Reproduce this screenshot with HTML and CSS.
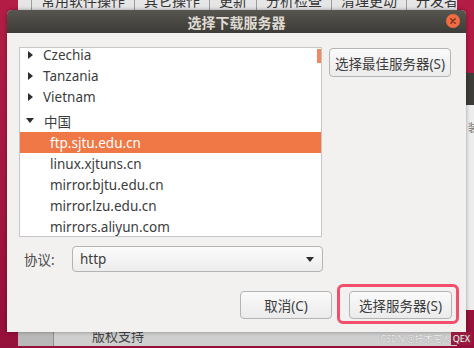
FILE: index.html
```html
<!DOCTYPE html>
<html lang="zh-CN">
<head>
    <meta charset="UTF-8">
    <meta name="viewport" content="width=device-width, initial-scale=1.0">
    <title>选择下载服务器</title>
    <link rel="stylesheet" href="styles.css">
</head>
<body>
    <div class="desktop">
        <!-- janela de fundo -->
        <div class="app-back">
            <div class="app-menu">
                <span class="menu-item">常用软件操作</span>
                <span class="menu-item">其它操作</span>
                <span class="menu-item">更新</span>
                <span class="menu-item">分析检查</span>
                <span class="menu-item">清理更动</span>
                <span class="menu-item">开发者选项</span>
            </div>
            <div class="app-bottom">
                <div class="app-panel">版权支持</div>
            </div>
        </div>
        <div class="side-app">
            <div class="side-dark"></div>
            <div class="side-body">装</div>
        </div>

        <div class="dialog">
            <div class="titlebar">
                <span class="title">选择下载服务器</span>
                <span class="close">
                    <svg width="14" height="14" viewBox="0 0 14 14">
                        <circle cx="7" cy="7" r="7" fill="#ef6d43"/>
                        <path d="M4.8 4.8 L9.2 9.2 M9.2 4.8 L4.8 9.2" stroke="#7a2a12" stroke-width="1.3" stroke-linecap="round"/>
                    </svg>
                </span>
            </div>
            <div class="dialog-body">
                <div class="top-row">
                    <div class="tree">
                        <div class="tree-rows">
                            <div class="row parent"><span class="arrow-right"></span>Czechia</div>
                            <div class="row parent"><span class="arrow-right"></span>Tanzania</div>
                            <div class="row parent"><span class="arrow-right"></span>Vietnam</div>
                            <div class="row parent open"><span class="arrow-down"></span>中国</div>
                            <div class="row child selected">ftp.sjtu.edu.cn</div>
                            <div class="row child">linux.xjtuns.cn</div>
                            <div class="row child">mirror.bjtu.edu.cn</div>
                            <div class="row child">mirror.lzu.edu.cn</div>
                            <div class="row child">mirrors.aliyun.com</div>
                        </div>
                        <div class="scroll-mark"></div>
                    </div>
                    <button class="btn best">选择最佳服务器(S)</button>
                </div>
                <div class="proto-row">
                    <span class="proto-label">协议:</span>
                    <div class="combo">
                        <span>http</span>
                        <span class="caret"></span>
                    </div>
                </div>
                <div class="actions">
                    <button class="btn cancel">取消(C)</button>
                    <button class="btn confirm">选择服务器(S)</button>
                </div>
            </div>
        </div>

        <div class="highlight"></div>
        <div class="watermark">CSDN @技术宅人<b>QEX</b></div>
    </div>
</body>
</html>
```

FILE: styles.css
```css
body {
    margin: 0;
    padding: 0;
    font-family: "Noto Sans", "Noto Sans CJK SC", sans-serif;
    overflow: hidden;
}
.desktop {
    position: relative;
    width: 474px;
    height: 348px;
    background: linear-gradient(#b41d45, #95103a); /* papel de parede */
    overflow: hidden;
}
.app-back {
    position: absolute;
    left: 18px;
    top: 0;
    width: 439px;
    height: 346px;
    background-color: #d6d6d6;
}
.app-menu {
    display: flex;
    height: 10px;
    padding-left: 13px;
    background-color: #e6e6e6;
    overflow: hidden;
}
.menu-item {
    border-left: 1px solid #9c9c9c;
    padding: 0 9px;
    font-size: 14px;
    line-height: 12px;
    color: #333;
    margin-top: -5px;
    white-space: nowrap;
}
.app-bottom {
    position: absolute;
    left: 0;
    right: 0;
    bottom: 0;
    height: 14px;
    background-color: #b9b9b9;
    padding-left: 12px;
}
.app-panel {
    height: 100%;
    margin-left: 23px;
    padding-left: 38px;
    border-left: 1px solid #8e8e8e;
    background-color: #cfcfcf;
    font-size: 13px;
    line-height: 8px;
    color: #444;
    overflow: hidden;
}
.side-app {
    position: absolute;
    left: 465px;
    top: 73px;
    width: 9px;
    height: 237px;
    background-color: #ededed;
}
.side-dark {
    height: 32px;
    background-color: #3d3c38;
}
.side-body {
    padding-top: 14px;
    padding-left: 3px;
    font-size: 11px;
    color: #777;
}
.dialog {
    position: absolute;
    left: 7px;
    top: 10px;
    width: 459px;
    height: 322px;
    background-color: #f2f1f0;
    border-radius: 5px 5px 0 0;
    box-shadow: 0 0 4px rgba(0, 0, 0, 0.35);
    display: flex;
    flex-direction: column;
}
.titlebar {
    height: 23px;
    display: flex;
    align-items: center;
    justify-content: center;
    background: linear-gradient(#57554f, #3d3c38);
    border-radius: 5px 5px 0 0;
    position: relative;
}
.title {
    color: #dfdbd2;
    font-size: 14px;
    font-weight: bold;
}
.close {
    position: absolute;
    right: 6px;
    top: 4px;
    width: 14px;
    height: 14px;
    display: flex;
}
.dialog-body {
    flex: 1;
    padding: 14px 14px 13px 12px;
    display: flex;
    flex-direction: column;
}
.top-row {
    display: flex;
    align-items: flex-start;
    gap: 7px;
}
.tree {
    position: relative;
    width: 301px;
    height: 188px;
    border: 1px solid #c6c6c6;
    background-color: #fff;
    overflow: hidden;
}
.tree-rows {
    margin-top: -4px;
}
.row {
    height: 21px;
    display: flex;
    align-items: center;
    font-size: 13.5px;
    color: #3c3c3c;
    white-space: nowrap;
}
.row.parent {
    padding-left: 17px;
}
.row.open {
    height: 25px;
    padding-top: 2px;
    box-sizing: border-box;
}
.row.child {
    padding-left: 30px;
}
.row.selected {
    background-color: #f07746;
    color: #fff;
}
.arrow-right {
    width: 0;
    height: 0;
    border-top: 4px solid transparent;
    border-bottom: 4px solid transparent;
    border-left: 5px solid #2e2e2e;
    margin-left: -9px;
    margin-right: 10px;
}
.arrow-down {
    width: 0;
    height: 0;
    border-left: 4px solid transparent;
    border-right: 4px solid transparent;
    border-top: 5px solid #2e2e2e;
    margin-left: -11px;
    margin-right: 10px;
}
.scroll-mark {
    position: absolute;
    right: 0;
    top: 1px;
    width: 4px;
    height: 14px;
    background-color: #f0895e;
}
.btn {
    font-family: "Noto Sans", "Noto Sans CJK SC", sans-serif;
    font-size: 13.5px;
    color: #3c3c3c;
    background: linear-gradient(#fafafa, #ebebeb);
    border: 1px solid #b4b4b4;
    border-radius: 4px;
    padding: 0;
    cursor: pointer;
}
.btn.best {
    width: 122px;
    height: 29px;
    margin-top: 1px;
}
.proto-row {
    display: flex;
    align-items: center;
    margin-top: 9px;
    height: 26px;
}
.proto-label {
    width: 48px;
    padding-left: 5px;
    font-size: 13.5px;
    color: #4a4a4a;
}
.combo {
    width: 235px;
    height: 24px;
    padding: 0 7px;
    display: flex;
    align-items: center;
    justify-content: space-between;
    border: 1px solid #b4b4b4;
    border-radius: 4px;
    background: linear-gradient(#fbfbfb, #ededed);
    font-size: 13.5px;
    color: #3c3c3c;
}
.caret {
    width: 0;
    height: 0;
    border-left: 4px solid transparent;
    border-right: 4px solid transparent;
    border-top: 5px solid #2e2e2e;
    margin-right: 1px;
}
.actions {
    display: flex;
    justify-content: flex-end;
    gap: 17px;
    margin-top: 19px;
}
.btn.cancel {
    width: 92px;
    height: 28px;
}
.btn.confirm {
    width: 103px;
    height: 28px;
}
.highlight {
    position: absolute;
    left: 337px;
    top: 284px;
    width: 116px;
    height: 34px;
    border: 3px solid #f24f6c;
    border-radius: 6px;
}
.watermark {
    position: absolute;
    right: 2px;
    bottom: 3px;
    font-size: 9px;
    color: #f0f0f0;
    text-shadow: 0 0 1px #777;
}
.watermark b {
    font-weight: normal;
    background-color: #9a1a3e;
    padding: 0 2px;
}
```
